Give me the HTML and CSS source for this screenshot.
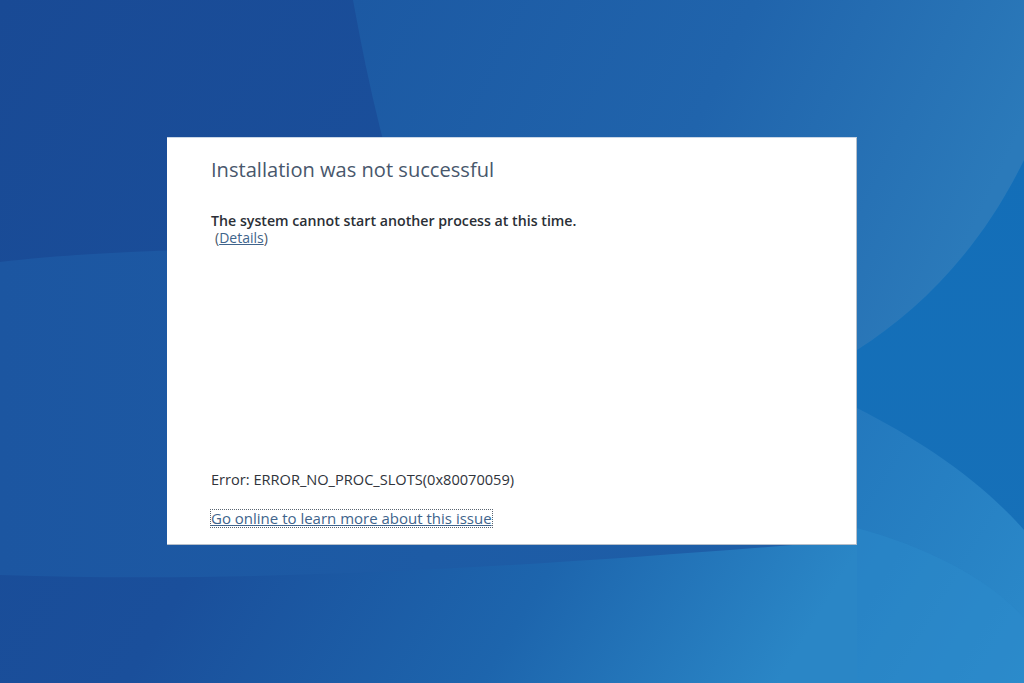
FILE: index.html
```html
<!DOCTYPE html>
<html lang="en">
<head>
<meta charset="utf-8">
<title>Installation was not successful</title>
<link rel="stylesheet" href="styles.css">
</head>
<body>
<div class="desktop">
  <svg class="wallpaper" width="1024" height="683" viewBox="0 0 1024 683" aria-hidden="true">
    <defs>
      <linearGradient id="base" x1="0" y1="0" x2="1" y2="0.4">
        <stop offset="0" stop-color="#194a95"/>
        <stop offset="0.45" stop-color="#1a4f9b"/>
        <stop offset="0.75" stop-color="#1d65ad"/>
        <stop offset="1" stop-color="#2a86c6"/>
      </linearGradient>
      <linearGradient id="upper" x1="0" y1="0" x2="1" y2="0.3">
        <stop offset="0" stop-color="#1c59a3"/>
        <stop offset="0.55" stop-color="#2064ac"/>
        <stop offset="1" stop-color="#2b7aba"/>
      </linearGradient>
      <linearGradient id="right" x1="0" y1="0" x2="0" y2="1">
        <stop offset="0" stop-color="#136eb8"/>
        <stop offset="1" stop-color="#1670b8"/>
      </linearGradient>
      <linearGradient id="lower" x1="0" y1="0" x2="1" y2="1">
        <stop offset="0" stop-color="#2378bd"/>
        <stop offset="1" stop-color="#2b8aca"/>
      </linearGradient>
      <linearGradient id="band" x1="0" y1="0" x2="1" y2="0">
        <stop offset="0" stop-color="#1c56a1"/>
        <stop offset="1" stop-color="#1e60a9"/>
      </linearGradient>
    </defs>
    <rect width="1024" height="683" fill="url(#base)"/>
    <path d="M0 262 C120 248 300 245 500 250 L857 540 C600 560 300 585 0 575 Z" fill="url(#band)"/>
    <path d="M353 0 L1024 0 L1024 160 C980 250 920 310 857 350 L500 420 C420 300 380 150 353 0 Z" fill="url(#upper)"/>
    <path d="M1024 160 C980 250 920 310 857 350 L800 420 L1024 560 Z" fill="url(#right)"/>
    <path d="M857 408 C920 440 980 480 1024 530 L1024 683 L857 683 Z" fill="url(#lower)"/>
    <path d="M857 528 C930 548 990 580 1024 618 L1024 683 L857 683 Z" fill="#2d8bcb" opacity="0.45"/>
  </svg>
  <div class="dialog">
    <h1 class="title">Installation was not successful</h1>
    <p class="message">The system cannot start another process at this time.</p>
    <p class="details">(<a class="link" href="#">Details</a>)</p>
    <p class="error">Error: ERROR_NO_PROC_SLOTS(0x80070059)</p>
    <p class="online"><a class="link focus" href="#">Go online to learn more about this issue</a></p>
  </div>
</div>
</body>
</html>
```
FILE: styles.css
```css
html, body {
  margin: 0;
  padding: 0;
  width: 1024px;
  height: 683px;
  overflow: hidden;
}
body {
  font-family: "Open Sans", "Noto Sans", "Liberation Sans", sans-serif;
}
.desktop {
  position: relative;
  width: 1024px;
  height: 683px;
  display: flex;
  align-items: center;
  justify-content: center;
}
.wallpaper {
  position: absolute;
  left: 0;
  top: 0;
}
.dialog {
  position: relative;
  box-sizing: border-box;
  width: 690px;
  height: 408px;
  margin-top: -1px;
  background: #ffffff;
  border-top: 1px solid #c9d6e6;
  border-right: 1px solid #b6bfca;
  border-bottom: 1px solid #b6bfca;
  padding: 18px 44px 17px 44px;
  display: flex;
  flex-direction: column;
  align-items: flex-start;
}
.title {
  margin: 0;
  font-size: 20.1px;
  font-weight: 400;
  line-height: 28px;
  color: #48576c;
}
.message {
  margin: 28px 0 0 0;
  font-size: 14.2px;
  line-height: 18px;
  font-weight: 600;
  color: #2b2f36;
}
.details {
  margin: -1px 0 0 4px;
  font-size: 14px;
  line-height: 18px;
  color: #4c5666;
}
.link {
  color: #40648c;
  text-decoration: underline;
}
.error {
  margin: auto 0 0 0;
  font-size: 14.6px;
  line-height: 18px;
  font-weight: 500;
  color: #30343b;
}
.online {
  margin: 21px 0 0 0;
  font-size: 15px;
  line-height: 18px;
}
.focus {
  display: inline-block;
  outline: 1px dotted #5a6470;
  outline-offset: 0;
  line-height: 17px;
}
```
